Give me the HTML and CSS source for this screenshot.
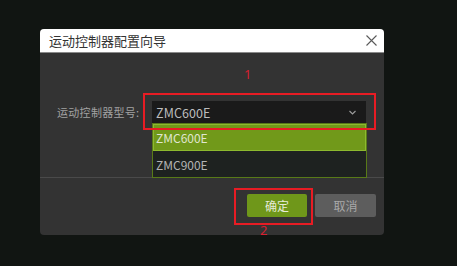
FILE: index.html
```html
<!DOCTYPE html>
<html>
<head>
<meta charset="utf-8">
<link rel="stylesheet" href="styles.css">
</head>
<body>
<div class="page">
  <div class="dialog">
    <div class="titlebar">
      <span class="title">运动控制器配置向导</span>
      <svg class="close" width="11" height="11" viewBox="0 0 11 11"><path d="M0.5 0.5 L10.5 10.5 M10.5 0.5 L0.5 10.5" stroke="#5a5a5a" stroke-width="1.1" fill="none"/></svg>
    </div>
    <div class="content">
      <div class="row">
        <span class="label">运动控制器型号:</span>
        <div class="select">
          <span class="value">ZMC600E</span>
          <svg class="chev" width="7" height="5" viewBox="0 0 7 5"><path d="M0.5 1 L3.5 4 L6.5 1" stroke="#9a9a9a" stroke-width="1.2" fill="none"/></svg>
          <div class="menu">
            <div class="item active">ZMC600E</div>
            <div class="item">ZMC900E</div>
          </div>
        </div>
      </div>
    </div>
    <div class="footer">
      <button class="btn ok">确定</button>
      <button class="btn cancel">取消</button>
    </div>
  </div>
  <div class="mark box1"></div>
  <div class="mark box2"></div>
  <div class="num n1">1</div>
  <div class="num n2">2</div>
</div>
</body>
</html>
```
FILE: styles.css
```css
html, body {
  margin: 0;
  padding: 0;
  background: #111512;
  width: 457px;
  height: 266px;
  overflow: hidden;
  font-family: "Noto Sans CJK SC", "Noto Sans", sans-serif;
}
.page {
  position: relative;
  width: 457px;
  height: 266px;
  padding: 29px 0 0 40px;
  box-sizing: border-box;
}
.dialog {
  width: 344px;
  height: 206px;
  background: #333333;
  border-radius: 4px;
  display: flex;
  flex-direction: column;
  overflow: hidden;
}
.titlebar {
  height: 23px;
  background: #ffffff;
  border-bottom: 1px solid #8a8a8a;
  display: flex;
  align-items: center;
  justify-content: space-between;
  padding: 0 7px 0 9px;
  flex-shrink: 0;
}
.title {
  font-size: 13px;
  color: #333333;
  line-height: 23px;
}
.close {
  display: block;
  margin-top: -1px;
}
.content {
  height: 125px;
  box-sizing: border-box;
  padding-top: 48px;
  border-bottom: 1px solid #4a4a4a;
  flex-shrink: 0;
}
.row {
  display: flex;
  align-items: center;
  padding-left: 17px;
}
.label {
  font-size: 11px;
  color: #a2a2a2;
  width: 95px;
  letter-spacing: 0.3px;
}
.select {
  position: relative;
  width: 214px;
  height: 22px;
  background: #1a1a1a;
  display: flex;
  align-items: center;
  justify-content: space-between;
  padding: 0 10px 0 4px;
  box-sizing: border-box;
}
.value {
  font-size: 12.5px;
  color: #bdbdbd;
  letter-spacing: 0.1px;
}
.chev {
  display: block;
}
.menu {
  position: absolute;
  left: 0;
  top: 22px;
  width: 215px;
  height: 55px;
  box-sizing: border-box;
  border: 1px solid #587a18;
  background: #1e2220;
  display: flex;
  flex-direction: column;
}
.item {
  height: 26px;
  font-size: 12px;
  color: #b4b4b4;
  letter-spacing: 0;
  display: flex;
  align-items: center;
  padding-left: 3px;
  box-sizing: border-box;
}
.item.active {
  height: 27px;
  background: #71991a;
  border: 1px solid #8db92e;
  color: #e0e6d0;
  padding-left: 2px;
}
.footer {
  flex: 1;
  display: flex;
  justify-content: flex-end;
  align-items: flex-start;
  padding: 16px 8px 0 0;
  gap: 8px;
}
.btn {
  height: 23px;
  width: 60px;
  border: none;
  border-radius: 2px;
  font-family: "Noto Sans CJK SC", sans-serif;
  font-size: 12px;
  padding: 0;
  line-height: 23px;
}
.btn.ok {
  background: #6f971a;
  color: #e6ead8;
}
.btn.cancel {
  width: 61px;
  background: #5d5d5d;
  color: #a9a9a9;
}
.mark {
  position: absolute;
  z-index: 10;
  border: 2px solid #e81c24;
  box-sizing: border-box;
}
.box1 {
  left: 143px;
  top: 93px;
  width: 233px;
  height: 37px;
}
.box2 {
  left: 234px;
  top: 188px;
  width: 79px;
  height: 37px;
}
.num {
  position: absolute;
  z-index: 10;
  color: #d82030;
  font-family: "Noto Sans", sans-serif;
  font-size: 13px;
  line-height: 14px;
}
.n1 {
  left: 244px;
  top: 67px;
}
.n2 {
  left: 260px;
  top: 223px;
}
```
